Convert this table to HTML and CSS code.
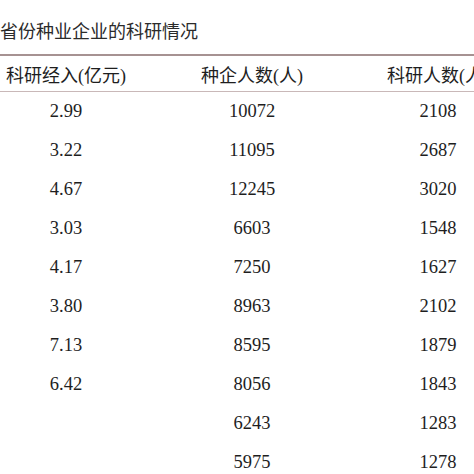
FILE: index.html
```html
<!DOCTYPE html>
<html lang="zh">
<head>
<meta charset="utf-8">
<link rel="stylesheet" href="styles.css">
</head>
<body>
<div class="page">
  <div class="title">省份种业企业的科研情况</div>
  <table class="data">
    <thead>
      <tr><th>科研经入(亿元)</th><th>种企人数(人)</th><th>科研人数(人)</th></tr>
    </thead>
    <tbody>
      <tr><td>2.99</td><td>10072</td><td>2108</td></tr>
      <tr><td>3.22</td><td>11095</td><td>2687</td></tr>
      <tr><td>4.67</td><td>12245</td><td>3020</td></tr>
      <tr><td>3.03</td><td>6603</td><td>1548</td></tr>
      <tr><td>4.17</td><td>7250</td><td>1627</td></tr>
      <tr><td>3.80</td><td>8963</td><td>2102</td></tr>
      <tr><td>7.13</td><td>8595</td><td>1879</td></tr>
      <tr><td>6.42</td><td>8056</td><td>1843</td></tr>
      <tr><td></td><td>6243</td><td>1283</td></tr>
      <tr><td></td><td>5975</td><td>1278</td></tr>
    </tbody>
  </table>
</div>
</body>
</html>
```
FILE: styles.css
```css
html, body {
  margin: 0;
  padding: 0;
  background: #ffffff;
  overflow: hidden;
}
.page {
  width: 474px;
  height: 474px;
  overflow: hidden;
}
.title {
  height: 54px;
  box-sizing: border-box;
  padding-top: 5px;
  display: flex;
  align-items: center;
  font-family: "Noto Sans CJK SC", sans-serif;
  font-size: 18px;
  color: #2b2b2b;
  white-space: nowrap;
}
.data {
  border-collapse: collapse;
  table-layout: fixed;
  width: 558px;
  margin-left: -27px;
  border-top: 2px solid #a69292;
  font-family: "Liberation Serif", "Noto Sans CJK SC", serif;
  color: #1e1e1e;
}
.data th {
  width: 186px;
  height: 35px;
  padding: 0;
  font-weight: normal;
  font-size: 18px;
  text-align: center;
  vertical-align: middle;
  border-bottom: 1px solid #c9b8b8;
  white-space: nowrap;
}
.data td {
  height: 39px;
  padding: 0;
  font-size: 18.5px;
  text-align: center;
  vertical-align: middle;
}
```
